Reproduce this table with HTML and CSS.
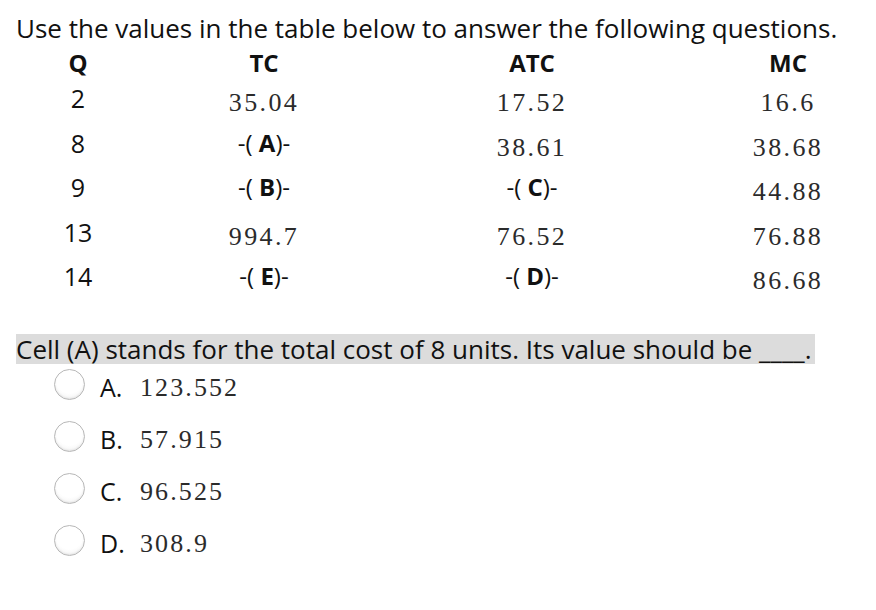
FILE: index.html
```html
<!DOCTYPE html>
<html>
<head>
<meta charset="utf-8">
<link rel="stylesheet" href="styles.css">
</head>
<body>
<div class="page">
  <p class="intro">Use the values in the table below to answer the following questions.</p>
  <div class="table">
    <div class="cell head">Q</div>
    <div class="cell head">TC</div>
    <div class="cell head">ATC</div>
    <div class="cell head last">MC</div>

    <div class="cell q">2</div>
    <div class="cell num">35.04</div>
    <div class="cell num">17.52</div>
    <div class="cell num last">16.6</div>

    <div class="cell q">8</div>
    <div class="cell lab">-( <b>A</b>)-</div>
    <div class="cell num">38.61</div>
    <div class="cell num last">38.68</div>

    <div class="cell q">9</div>
    <div class="cell lab">-( <b>B</b>)-</div>
    <div class="cell lab">-( <b>C</b>)-</div>
    <div class="cell num last">44.88</div>

    <div class="cell q">13</div>
    <div class="cell num">994.7</div>
    <div class="cell num">76.52</div>
    <div class="cell num last">76.88</div>

    <div class="cell q">14</div>
    <div class="cell lab">-( <b>E</b>)-</div>
    <div class="cell lab">-( <b>D</b>)-</div>
    <div class="cell num last">86.68</div>
  </div>

  <div class="question"><span class="qtext">Cell (A) stands for the total cost of 8 units. Its value should be ____.</span></div>

  <ul class="options">
    <li class="option"><span class="radio"></span><span class="letter">A.</span><span class="val">123.552</span></li>
    <li class="option"><span class="radio"></span><span class="letter">B.</span><span class="val">57.915</span></li>
    <li class="option"><span class="radio"></span><span class="letter">C.</span><span class="val">96.525</span></li>
    <li class="option"><span class="radio"></span><span class="letter">D.</span><span class="val">308.9</span></li>
  </ul>
</div>
</body>
</html>
```

FILE: styles.css
```css
html, body {
  margin: 0;
  padding: 0;
  background: #ffffff;
}

.page {
  padding: 11px 0 0 16px;
  font-family: "Open Sans", "Liberation Sans", sans-serif;
  color: #111111;
}

.intro {
  margin: 0;
  font-size: 26px;
  line-height: 34px;
}

.table {
  margin-top: 3px;
  display: grid;
  grid-template-columns: 124px 248px 288px 200px;
  grid-template-rows: 28px repeat(5, 44.5px);
}

.cell {
  text-align: center;
  font-size: 25px;
  line-height: 44.5px;
}

.cell.last {
  padding-left: 24px;
}

.head {
  font-size: 24px;
  font-weight: 700;
  line-height: 30px;
}

.lab {
  font-size: 24px;
}

.lab b {
  font-weight: 700;
}

.num {
  font-family: "Liberation Serif", "Times New Roman", serif;
  font-size: 26px;
  letter-spacing: 2.4px;
  color: #2b2b2b;
  padding-top: 5px;
}

.question {
  margin-top: 35px;
}

.qtext {
  display: inline-block;
  background: #dcdcdc;
  font-size: 26px;
  line-height: 30px;
  padding-right: 3px;
}

.options {
  list-style: none;
  margin: 0;
  padding: 5px 0 0 38px;
  display: flex;
  flex-direction: column;
  gap: 21px;
}

.option {
  display: flex;
  align-items: center;
  height: 31px;
}

.radio {
  width: 29px;
  height: 29px;
  border-radius: 50%;
  border: 1px solid #b8b8b8;
  background: radial-gradient(circle at 50% 35%, #ffffff 55%, #ececec 100%);
  box-shadow: inset 0 -1px 2px rgba(0,0,0,0.08);
  flex: none;
}

.letter {
  width: 40px;
  margin-left: 15px;
  font-size: 25px;
  padding-top: 6px;
}

.val {
  font-family: "Liberation Serif", "Times New Roman", serif;
  font-size: 26px;
  letter-spacing: 2.1px;
  color: #2b2b2b;
  padding-top: 8px;
}
```
